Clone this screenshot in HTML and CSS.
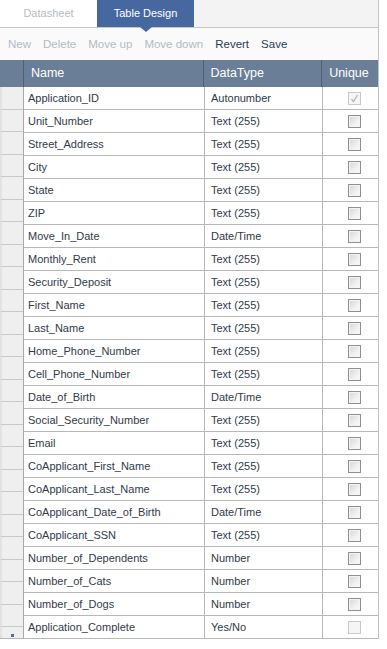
FILE: index.html
```html
<!DOCTYPE html>
<html lang="en">
<head>
    <meta charset="UTF-8">
    <title>Table Design</title>
    <link rel="stylesheet" href="styles.css">
</head>
<body>
    <div class="designer">
        <div class="tabs">
            <div class="tab">Datasheet</div>
            <div class="tab active">Table Design</div>
        </div>

        <div class="toolbar">
            <button class="tool" disabled>New</button>
            <button class="tool" disabled>Delete</button>
            <button class="tool" disabled>Move up</button>
            <button class="tool" disabled>Move down</button>
            <button class="tool">Revert</button>
            <button class="tool">Save</button>
        </div>

        <div class="grid-head">
            <div class="head-sel"></div>
            <div class="head-cell col-name">Name</div>
            <div class="head-cell col-type">DataType</div>
            <div class="head-cell col-unique">Unique</div>
        </div>

        <div class="grid-body">
            <div class="selectors">
                <div class="sel"></div><div class="sel"></div><div class="sel"></div><div class="sel"></div>
                <div class="sel"></div><div class="sel"></div><div class="sel"></div><div class="sel"></div>
                <div class="sel"></div><div class="sel"></div><div class="sel"></div><div class="sel"></div>
                <div class="sel"></div><div class="sel"></div><div class="sel"></div><div class="sel"></div>
                <div class="sel"></div><div class="sel"></div><div class="sel"></div><div class="sel"></div>
                <div class="sel"></div><div class="sel"></div><div class="sel"></div><div class="sel"></div>
                <div class="sel new-row"><span class="new-mark"></span></div>
            </div>

            <table class="fields">
                <tr><td class="col-name">Application_ID</td><td class="col-type">Autonumber</td><td class="col-unique"><span class="check disabled checked"><svg width="9" height="9" viewBox="0 0 9 9"><path d="M1.5 5 L3.5 7.5 L7.5 1" fill="none" stroke="#b9b9b9" stroke-width="1.3"/></svg></span></td></tr>
                <tr><td class="col-name">Unit_Number</td><td class="col-type">Text (255)</td><td class="col-unique"><span class="check"></span></td></tr>
                <tr><td class="col-name">Street_Address</td><td class="col-type">Text (255)</td><td class="col-unique"><span class="check"></span></td></tr>
                <tr><td class="col-name">City</td><td class="col-type">Text (255)</td><td class="col-unique"><span class="check"></span></td></tr>
                <tr><td class="col-name">State</td><td class="col-type">Text (255)</td><td class="col-unique"><span class="check"></span></td></tr>
                <tr><td class="col-name">ZIP</td><td class="col-type">Text (255)</td><td class="col-unique"><span class="check"></span></td></tr>
                <tr><td class="col-name">Move_In_Date</td><td class="col-type">Date/Time</td><td class="col-unique"><span class="check"></span></td></tr>
                <tr><td class="col-name">Monthly_Rent</td><td class="col-type">Text (255)</td><td class="col-unique"><span class="check"></span></td></tr>
                <tr><td class="col-name">Security_Deposit</td><td class="col-type">Text (255)</td><td class="col-unique"><span class="check"></span></td></tr>
                <tr><td class="col-name">First_Name</td><td class="col-type">Text (255)</td><td class="col-unique"><span class="check"></span></td></tr>
                <tr><td class="col-name">Last_Name</td><td class="col-type">Text (255)</td><td class="col-unique"><span class="check"></span></td></tr>
                <tr><td class="col-name">Home_Phone_Number</td><td class="col-type">Text (255)</td><td class="col-unique"><span class="check"></span></td></tr>
                <tr><td class="col-name">Cell_Phone_Number</td><td class="col-type">Text (255)</td><td class="col-unique"><span class="check"></span></td></tr>
                <tr><td class="col-name">Date_of_Birth</td><td class="col-type">Date/Time</td><td class="col-unique"><span class="check"></span></td></tr>
                <tr><td class="col-name">Social_Security_Number</td><td class="col-type">Text (255)</td><td class="col-unique"><span class="check"></span></td></tr>
                <tr><td class="col-name">Email</td><td class="col-type">Text (255)</td><td class="col-unique"><span class="check"></span></td></tr>
                <tr><td class="col-name">CoApplicant_First_Name</td><td class="col-type">Text (255)</td><td class="col-unique"><span class="check"></span></td></tr>
                <tr><td class="col-name">CoApplicant_Last_Name</td><td class="col-type">Text (255)</td><td class="col-unique"><span class="check"></span></td></tr>
                <tr><td class="col-name">CoApplicant_Date_of_Birth</td><td class="col-type">Date/Time</td><td class="col-unique"><span class="check"></span></td></tr>
                <tr><td class="col-name">CoApplicant_SSN</td><td class="col-type">Text (255)</td><td class="col-unique"><span class="check"></span></td></tr>
                <tr><td class="col-name">Number_of_Dependents</td><td class="col-type">Number</td><td class="col-unique"><span class="check"></span></td></tr>
                <tr><td class="col-name">Number_of_Cats</td><td class="col-type">Number</td><td class="col-unique"><span class="check"></span></td></tr>
                <tr><td class="col-name">Number_of_Dogs</td><td class="col-type">Number</td><td class="col-unique"><span class="check"></span></td></tr>
                <tr><td class="col-name">Application_Complete</td><td class="col-type">Yes/No</td><td class="col-unique"><span class="check disabled"></span></td></tr>
            </table>
        </div>
    </div>
</body>
</html>
```

FILE: styles.css
```css
body {
    margin: 0;
    background: #fff;
    font-family: "Liberation Sans", Arial, sans-serif;
    color: #2f3b4a;
}
.designer {
    width: 378px;
    border-right: 1px solid #c4c4c4;
}

/* tabs */
.tabs {
    display: flex;
    height: 27px;
    background: #f3f3f3;
    border-bottom: 1px solid #c6c6c6;
}
.tab {
    position: relative;
    width: 97px;
    line-height: 27px;
    text-align: center;
    font-size: 11px;
    color: #b6bcc6;
    background: #fff;
}
.tab.active {
    background: #46679f;
    color: #fff;
}
.tab.active::after {
    content: "";
    position: absolute;
    left: 43px;
    bottom: -5px;
    border-left: 6px solid transparent;
    border-right: 6px solid transparent;
    border-top: 5px solid #46679f;
}

/* toolbar */
.toolbar {
    display: flex;
    align-items: center;
    height: 32px;
    padding-left: 2px;
    background: #fafafa;
}
.tool {
    background: transparent;
    border: none;
    padding: 0 6px;
    font-family: inherit;
    font-size: 11.5px;
    color: #2c3d54;
    cursor: pointer;
}
.tool:disabled {
    color: #b3bac5;
    cursor: default;
}

/* grid */
.grid-head {
    display: flex;
    height: 27px;
    background: #6a7e97;
    color: #fff;
    font-size: 12.5px;
}
.head-sel {
    width: 23px;
    border-right: 1px solid #4f5f74;
}
.head-cell {
    line-height: 27px;
    box-sizing: border-box;
}
.head-cell.col-name {
    width: 181px;
    padding-left: 7px;
    border-right: 1px solid #4f5f74;
}
.head-cell.col-type {
    width: 118px;
    padding-left: 6px;
    border-right: 1px solid #4f5f74;
}
.head-cell.col-unique {
    width: 56px;
    padding-left: 7px;
}

.grid-body {
    display: flex;
    height: 551px;
    border-bottom: 1px solid #b8b8b8;
    overflow: hidden;
}
.selectors {
    width: 23px;
    flex-shrink: 0;
    border-right: 1px solid #a9a9a9;
    background: #efefef;
}
.sel {
    height: 21.5px;
    border-bottom: 1px solid #c9c9c9;
    border-left: 2px solid #e2e2e2;
}
.sel.new-row {
    position: relative;
    border-bottom: none;
}
.new-mark {
    position: absolute;
    left: 9px;
    top: 7px;
    width: 3px;
    height: 3px;
    background: #5a6f96;
}

.fields {
    border-collapse: collapse;
    table-layout: fixed;
    width: 355px;
    font-size: 11px;
}
.fields td {
    height: 22px;
    padding: 0;
    border-bottom: 1px solid #b8b8b8;
    white-space: nowrap;
    overflow: hidden;
}
.fields tr:last-child td {
    border-bottom: none;
}
.fields .col-name {
    width: 176px;
    padding-left: 4px;
    border-right: 1px solid #b8b8b8;
}
.fields .col-type {
    width: 111px;
    padding-left: 6px;
    border-right: 1px solid #b8b8b8;
}
.fields .col-unique {
    padding-left: 25px;
}

/* checkbox */
.check {
    display: block;
    box-sizing: border-box;
    width: 13px;
    height: 13px;
    border: 1px solid #8f8f8f;
    background: linear-gradient(135deg, #d2d6dc 0%, #eef0f2 60%, #fbfbfb 100%);
    box-shadow: inset 0 0 0 1px #f4f4f4;
}
.check.disabled {
    border-color: #c9c9c9;
    background: #f5f5f5;
    box-shadow: none;
}
.check svg {
    display: block;
    margin: 1px 0 0 1px;
}
```
